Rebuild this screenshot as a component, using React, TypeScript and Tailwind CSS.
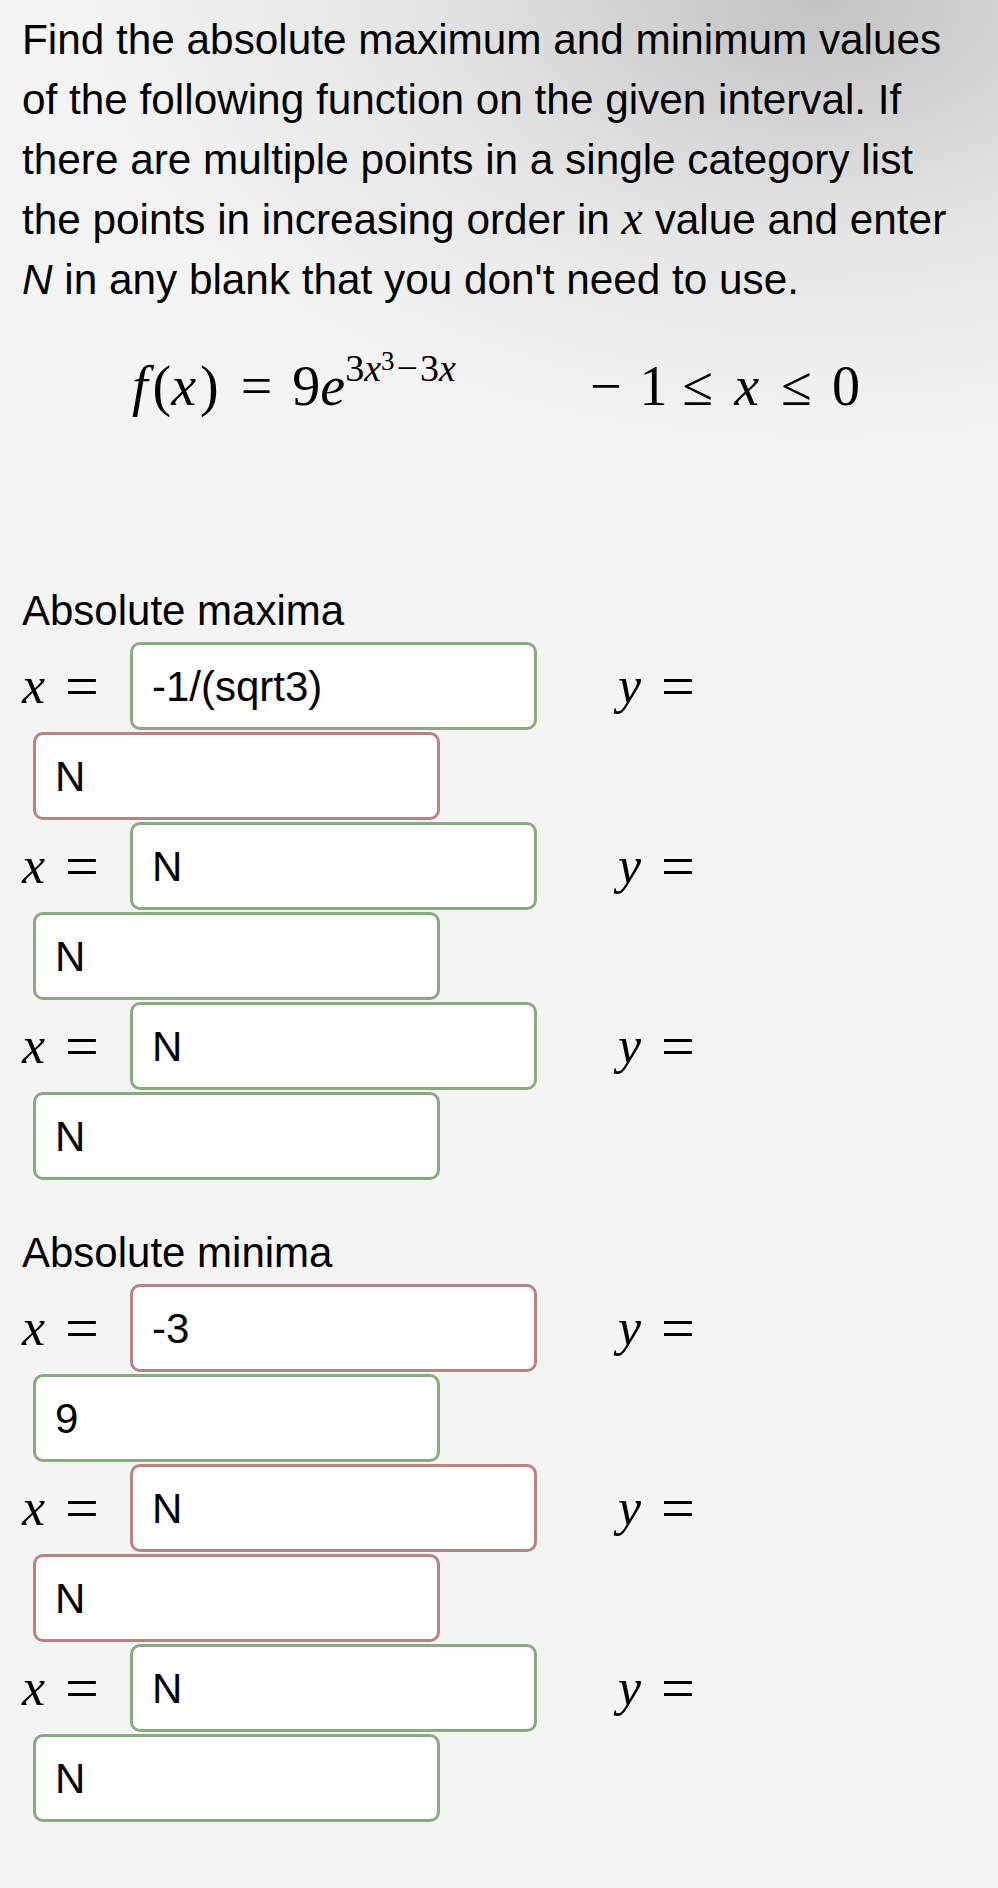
import React from "react"

const sans = "font-['Liberation_Sans',Arial,Helvetica,sans-serif]"
const serif = "font-['Liberation_Serif','Times_New_Roman',serif]"

type Answer = { x: string; xOk: boolean; y: string; yOk: boolean }

const maxima: Answer[] = [
  { x: "-1/(sqrt3)", xOk: true, y: "N", yOk: false },
  { x: "N", xOk: true, y: "N", yOk: true },
  { x: "N", xOk: true, y: "N", yOk: true },
]

const minima: Answer[] = [
  { x: "-3", xOk: false, y: "9", yOk: true },
  { x: "N", xOk: false, y: "N", yOk: false },
  { x: "N", xOk: true, y: "N", yOk: true },
]

function Var({ v }: { v: string }) {
  return <span className={`${serif} italic text-[48px] leading-none`}>{v}</span>
}

function MathLabel({ v, className = "" }: { v: string; className?: string }) {
  return (
    <div className={`flex items-center ${serif} text-[52px] leading-none ${className}`}>
      <span className="italic">{v}</span>
      <span className="ml-[20px] text-[60px]">=</span>
    </div>
  )
}

function AnswerBox({ value, ok }: { value: string; ok: boolean }) {
  return (
    <div
      className={`flex h-[88px] w-[407px] items-center rounded-[10px] border-[3px] bg-white pl-[19px] text-[42px] text-black ${sans} ${
        ok ? "border-[#88ab80]" : "border-[#bb8282]"
      }`}
    >
      {value}
    </div>
  )
}

function AnswerPair({ a }: { a: Answer }) {
  return (
    <>
      <div className="flex items-center">
        <div className="w-[108px]">
          <MathLabel v="x" />
        </div>
        <AnswerBox value={a.x} ok={a.xOk} />
        <MathLabel v="y" className="ml-[81px]" />
      </div>
      <div className="pl-[11px]">
        <AnswerBox value={a.y} ok={a.yOk} />
      </div>
    </>
  )
}

function Section({ title, rows, className = "" }: { title: string; rows: Answer[]; className?: string }) {
  return (
    <div className={className}>
      <h2 className="text-[42px] leading-[60px] font-normal">{title}</h2>
      <div className="mt-[1px] flex flex-col gap-[2px]">
        {rows.map((a, i) => (
          <AnswerPair key={i} a={a} />
        ))}
      </div>
    </div>
  )
}

export default function App() {
  return (
    <div
      className={`min-h-[1888px] w-full bg-[#f4f4f4] bg-[radial-gradient(ellipse_75%_24%_at_82%_0%,#c3c3c3,#e6e6e6_55%,#f4f4f4)] text-black ${sans}`}
    >
      <div className="px-[22px] pt-[10px]">
        <p className="whitespace-nowrap text-[42.3px] leading-[60px]">
          Find the absolute maximum and minimum values
          <br />
          of the following function on the given interval. If
          <br />
          there are multiple points in a single category list
          <br />
          the points in increasing order in <Var v="x" /> value and enter
          <br />
          <i>N</i> in any blank that you don't need to use.
        </p>

        {/* f(x) = 9e^(3x^3-3x)   -1 <= x <= 0 */}
        <div className={`mt-[46px] flex h-[60px] items-baseline ${serif} text-[56px] leading-[60px]`}>
          <div className="ml-[110px] w-[458px] whitespace-nowrap">
            <span className="italic">f</span>
            <span className="ml-[5px]">(</span>
            <span className="italic">x</span>
            <span className="ml-[4px]">)</span>
            <span className="ml-[22px]">=</span>
            <span className="ml-[20px]">9</span>
            <span className="italic">e</span>
            <span className="relative -top-[24px] text-[38px]">
              3<span className="italic">x</span>
              <span className="relative -top-[11px] text-[27px]">3</span>
              <span className="mx-[2px]">−</span>3<span className="italic">x</span>
            </span>
          </div>
          <div className="whitespace-nowrap">
            <span>−</span>
            <span className="ml-[18px]">1</span>
            <span className="ml-[15px]">≤</span>
            <span className="ml-[21px] italic">x</span>
            <span className="ml-[22px]">≤</span>
            <span className="ml-[20px]">0</span>
          </div>
        </div>

        <Section title="Absolute maxima" rows={maxima} className="mt-[165px]" />
        <Section title="Absolute minima" rows={minima} className="mt-[43px]" />
      </div>
    </div>
  )
}
